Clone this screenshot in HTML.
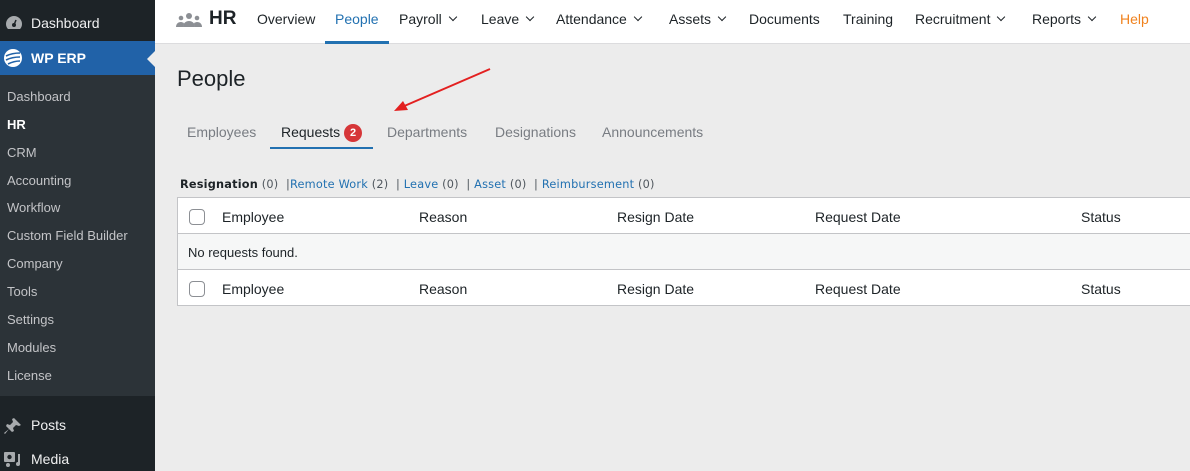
<!DOCTYPE html>
<html><head><meta charset="utf-8"><style>
*{box-sizing:border-box;margin:0;padding:0}
body{width:1190px;height:471px;overflow:hidden;background:#ececec;font-family:"Liberation Sans",Arial,sans-serif;position:relative;color:#1d2327}
.sb{position:absolute;left:0;top:0;width:155px;height:471px;background:#1d2327}
.sub{position:absolute;left:0;top:75px;width:155px;height:321px;background:#2c3338}
.erp{position:absolute;left:0;top:41px;width:155px;height:34px;background:#2162a8;color:#fff;font-size:14px;font-weight:bold}
.erp:after{content:"";position:absolute;right:0;top:10px;border:8px solid transparent;border-right-color:#ececec}
.t{position:absolute;font-size:14px;color:#f0f0f1}
.s{position:absolute;left:7px;font-size:13px;color:#c3c4c7}
.hdr{position:absolute;left:155px;top:0;right:0;height:44px;background:#fff;border-bottom:1px solid #dcdcde}
.n{position:absolute;top:11px;font-size:14px;color:#1d2327}
.car{display:inline-block;width:6px;height:6px;border-right:1.6px solid #1d2327;border-bottom:1.6px solid #1d2327;transform:rotate(45deg);margin-left:8px;position:relative;top:-4px}
.tab{position:absolute;top:124px;font-size:14px;color:#787c82}
.f{position:absolute;top:178px;font-size:11.3px;color:#50575e;font-family:"DejaVu Sans",sans-serif;letter-spacing:.2px;white-space:nowrap}
.f a{color:#2271b1;text-decoration:none}
.tbl{position:absolute;left:177px;top:197px;width:1020px;height:109px;border:1px solid #c3c4c7;background:#fff}
.row{position:absolute;left:0;right:0;height:36px;font-size:14px}
.row span{position:absolute;top:11px}
.cb{position:absolute;left:11px;top:11px;width:16px;height:16px;border:1px solid #8c8f94;border-radius:4px;background:#fff}
</style></head><body>
<div class="sb"></div><div class="sub"></div>
<svg style="position:absolute;left:5px;top:15px" width="18" height="16" viewBox="0 0 18 16"><path d="M9 1a8 8 0 0 0-8 8c0 2 .7 3.7 2 5h12c1.3-1.3 2-3 2-5a8 8 0 0 0-8-8z" fill="#a7aaad"/><circle cx="9" cy="10" r="2" fill="#1d2327"/><path d="M9 10l2-5" stroke="#1d2327" stroke-width="1.5"/></svg>
<div class="t" style="left:31px;top:15px">Dashboard</div>
<div class="erp"><svg style="position:absolute;left:3px;top:7px" width="20" height="20" viewBox="0 0 20 20"><circle cx="10" cy="10" r="9" fill="#fff"/><path d="M3 8c4-2 9-3 14-3M3 12c4-2 9-3 14-3M5 16c4-2 8-3 12-3" stroke="#2162a8" stroke-width="1.6" fill="none"/></svg><span style="position:absolute;left:31px;top:9px">WP ERP</span></div>
<div class="s" style="top:89px">Dashboard</div>
<div class="s" style="top:117px;color:#fff;font-weight:bold">HR</div>
<div class="s" style="top:145px">CRM</div>
<div class="s" style="top:173px">Accounting</div>
<div class="s" style="top:200px">Workflow</div>
<div class="s" style="top:228px">Custom Field Builder</div>
<div class="s" style="top:256px">Company</div>
<div class="s" style="top:284px">Tools</div>
<div class="s" style="top:312px">Settings</div>
<div class="s" style="top:340px">Modules</div>
<div class="s" style="top:368px">License</div>
<svg style="position:absolute;left:4px;top:417px" width="18" height="18" viewBox="0 0 18 18"><path d="M10 1l7 7-2 1-3-1-3 3 1 3-2 1-3-3-4 5-1-1 5-4-3-3 1-2 3 1 3-3-1-3z" fill="#a7aaad"/></svg>
<div class="t" style="left:31px;top:417px">Posts</div>
<svg style="position:absolute;left:4px;top:450px" width="18" height="18" viewBox="0 0 18 18"><rect x="0" y="2" width="11" height="10" rx="1" fill="#a7aaad"/><circle cx="5.5" cy="7" r="2.2" fill="#1d2327"/><path d="M14 4h2v10a2 2 0 1 1-2-2z" fill="#a7aaad"/><circle cx="4" cy="15" r="2" fill="#a7aaad"/></svg>
<div class="t" style="left:31px;top:451px">Media</div>

<div class="hdr"></div>
<svg style="position:absolute;left:176px;top:12px" width="26" height="16" viewBox="0 0 26 16"><circle cx="13" cy="4" r="3" fill="#8c8f94"/><path d="M7 15c0-4 3-6 6-6s6 2 6 6z" fill="#8c8f94"/><circle cx="5" cy="6" r="2.3" fill="#8c8f94"/><path d="M0 15c0-3 2-5 5-5 1 0 2 .5 3 1l-1 4z" fill="#8c8f94"/><circle cx="21" cy="6" r="2.3" fill="#8c8f94"/><path d="M26 15c0-3-2-5-5-5-1 0-2 .5-3 1l1 4z" fill="#8c8f94"/></svg>
<div style="position:absolute;left:209px;top:8px;font-size:19px;font-weight:bold">HR</div>
<div class="n" style="left:257px">Overview</div>
<div class="n" style="left:335px;color:#2271b1">People</div>
<div style="position:absolute;left:325px;top:41px;width:64px;height:3px;background:#2271b1"></div>
<div class="n" style="left:399px">Payroll<i class="car"></i></div>
<div class="n" style="left:481px">Leave<i class="car"></i></div>
<div class="n" style="left:556px">Attendance<i class="car"></i></div>
<div class="n" style="left:669px">Assets<i class="car"></i></div>
<div class="n" style="left:749px">Documents</div>
<div class="n" style="left:843px">Training</div>
<div class="n" style="left:915px">Recruitment<i class="car"></i></div>
<div class="n" style="left:1032px">Reports<i class="car"></i></div>
<div class="n" style="left:1120px;color:#f0821e">Help</div>

<div style="position:absolute;left:177px;top:66px;font-size:22px;color:#1d2327">People</div>
<svg style="position:absolute;left:390px;top:65px" width="110" height="50"><line x1="100" y1="4" x2="12" y2="42" stroke="#e32020" stroke-width="2"/><path d="M4 46l14-1-5-9z" fill="#e32020"/></svg>
<div class="tab" style="left:187px">Employees</div>
<div class="tab" style="left:281px;color:#1d2327">Requests <span style="display:inline-block;width:18px;height:18px;border-radius:9px;background:#d63638;color:#fff;font-size:11px;font-weight:bold;text-align:center;line-height:18px;vertical-align:1px">2</span></div>
<div style="position:absolute;left:270px;top:147px;width:103px;height:2px;background:#2271b1"></div>
<div class="tab" style="left:387px">Departments</div>
<div class="tab" style="left:495px">Designations</div>
<div class="tab" style="left:602px">Announcements</div>
<div class="f" style="left:180px"><b style="color:#1d2327">Resignation</b> (0) &nbsp;|<a>Remote Work</a> (2) &nbsp;| <a>Leave</a> (0) &nbsp;| <a>Asset</a> (0) &nbsp;| <a>Reimbursement</a> (0)</div>
<div class="tbl">
<div class="row" style="top:0;border-bottom:1px solid #c3c4c7"><i class="cb"></i><span style="left:44px">Employee</span><span style="left:241px">Reason</span><span style="left:439px">Resign Date</span><span style="left:637px">Request Date</span><span style="left:903px">Status</span></div>
<div class="row" style="top:36px;background:#f6f7f7;border-bottom:1px solid #c3c4c7;font-size:13px"><span style="left:10px">No requests found.</span></div>
<div class="row" style="top:72px"><i class="cb"></i><span style="left:44px">Employee</span><span style="left:241px">Reason</span><span style="left:439px">Resign Date</span><span style="left:637px">Request Date</span><span style="left:903px">Status</span></div>
</div>
</body></html>
